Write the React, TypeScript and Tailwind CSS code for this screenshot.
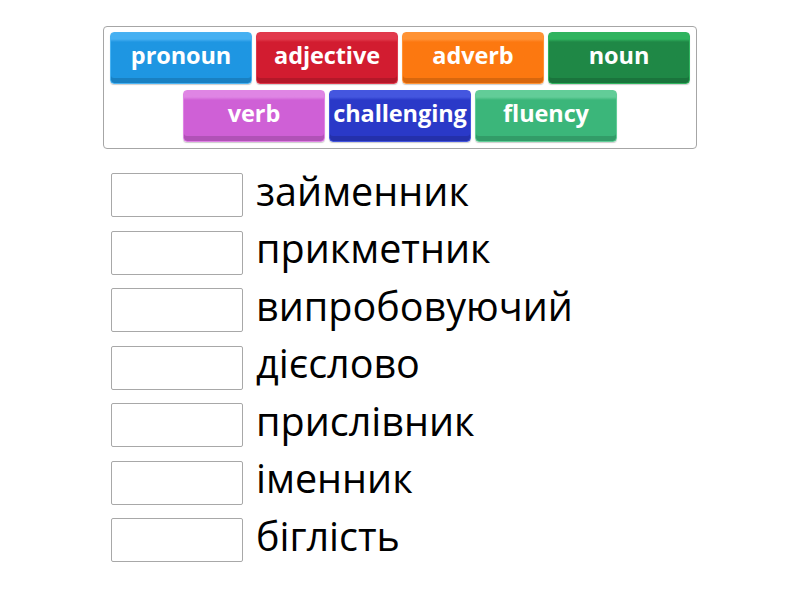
import React from "react";

const tiles = [
  { t: "pronoun", c: "border-[#48b2f2] from-[#45b0f2] to-[#1e96e2]" },
  { t: "adjective", c: "border-[#e0384b] from-[#e2394c] to-[#d21c30]" },
  { t: "adverb", c: "border-[#ff9233] from-[#ff9233] to-[#fc7810]" },
  { t: "noun", c: "border-[#2fb35e] from-[#2fb35e] to-[#1f8846]" },
  { t: "verb", c: "border-[#df85e4] from-[#df85e4] to-[#cf60d6]" },
  { t: "challenging", c: "border-[#4456df] from-[#4456df] to-[#2a39c8]" },
  { t: "fluency", c: "border-[#62cd98] from-[#62cd98] to-[#3bb67a]" },
];

const answers = [
  "займенник",
  "прикметник",
  "випробовуючий",
  "дієслово",
  "прислівник",
  "іменник",
  "біглість",
];

export default function App() {
  return (
    <div className="w-[800px] h-[600px] bg-white" style={{ fontFamily: '"Open Sans", sans-serif' }}>
      <div className="w-[594px] mx-auto pt-[26px]">
        <div className="border border-[#a6a6a6] rounded-[4px] px-[6px] pt-[5px] pb-[6px] flex flex-wrap justify-center gap-x-[4px] gap-y-[6px]">
          {tiles.map((x) => (
            <div
              key={x.t}
              className={`w-[142px] h-[52px] rounded-[4px] border bg-linear-to-b from-[12%] to-[18%] shadow-[inset_0_-5px_0_rgba(0,0,0,0.14),0_1px_1px_rgba(0,0,0,0.2)] flex items-center justify-center pb-[5px] text-white font-bold text-[23.5px] tracking-[-0.1px] ${x.c}`}
            >
              {x.t}
            </div>
          ))}
        </div>
        <div className="pl-[8px] pt-[24px] flex flex-col gap-[13.5px]">
          {answers.map((a) => (
            <div key={a} className="flex items-start gap-[13px]">
              <div className="w-[132px] h-[44px] border border-[#a8a8a8] rounded-[2px] bg-white shrink-0" />
              <div className="text-[39.5px] leading-[44px] text-black mt-[-4.5px] whitespace-nowrap">{a}</div>
            </div>
          ))}
        </div>
      </div>
    </div>
  );
}
